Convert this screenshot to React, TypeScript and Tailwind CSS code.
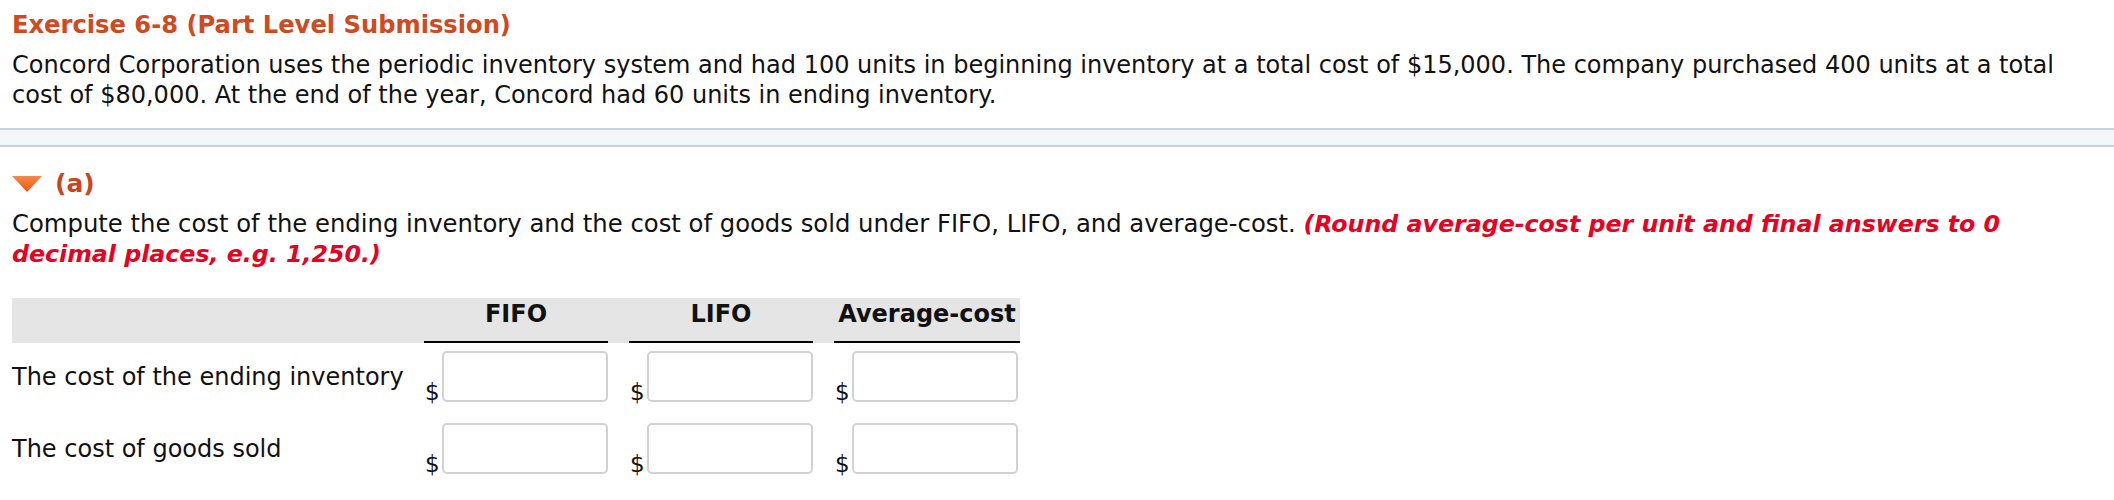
import React from "react";

const font = { fontFamily: '"DejaVu Sans", Verdana, sans-serif' };

function Cell({ w }: { w: string }) {
  return (
    <div className={`flex items-end shrink-0 ${w}`}>
      <span className="text-[23px] leading-[20px] text-[#111] w-[18px] pl-[1px]">$</span>
      <div className="w-[166px] h-[51px] border-2 border-[#d2d2d2] rounded-[5px] bg-white" />
    </div>
  );
}

function Row({ label }: { label: string }) {
  return (
    <div className="flex items-start">
      <div className="w-[412px] shrink-0 pt-[11px] text-[24px] leading-[30px] text-[#111] whitespace-nowrap">{label}</div>
      <div className="flex gap-[21px]">
        <Cell w="w-[184px]" />
        <Cell w="w-[184px]" />
        <Cell w="w-[186px]" />
      </div>
    </div>
  );
}

export default function App() {
  return (
    <div className="w-[2114px] h-[500px] bg-white overflow-hidden" style={font}>
      <div className="px-3 pt-[10px]">
        <h1 className="text-[24.2px] leading-[30px] font-bold text-[#d04a1f]">
          Exercise 6-8 (Part Level Submission)
        </h1>
        <p className="mt-[10px] text-[24px] leading-[30px] text-[#111]">
          Concord Corporation uses the periodic inventory system and had 100 units in beginning inventory at a total cost of $15,000. The company purchased 400 units at a total cost of $80,000. At the end of the year, Concord had 60 units in ending inventory.
        </p>
      </div>
      <div className="mt-[18px] h-[19px] border-y-2 border-[#c9d1dc] bg-[#f4f7fa]" />
      <div className="px-3">
        <div className="mt-[22px] flex items-center gap-[13px] h-[30px]">
          <svg width="30" height="16" viewBox="0 0 30 16" className="shrink-0">
            <defs>
              <linearGradient id="tri" x1="0" y1="0" x2="0" y2="1">
                <stop offset="0" stopColor="#f58a4a" />
                <stop offset="1" stopColor="#f0560f" />
              </linearGradient>
            </defs>
            <polygon points="0,0 30,0 15,16" fill="url(#tri)" />
          </svg>
          <span className="text-[25px] leading-[30px] font-bold text-[#c8461e]">(a)</span>
        </div>
        <p className="mt-[10px] text-[24.3px] leading-[30px] text-[#111]">
          Compute the cost of the ending inventory and the cost of goods sold under FIFO, LIFO, and average-cost.{" "}
          <span className="font-bold italic text-[23.7px] text-[#ea0020]">
            (Round average-cost per unit and final answers to 0 decimal places, e.g. 1,250.)
          </span>
        </p>
        <div className="mt-[29px] w-[1008px] h-[45px] bg-[#e5e5e5] flex">
          <div className="w-[412px] shrink-0" />
          <div className="flex gap-[21px]">
            <div className="w-[184px] border-b-2 border-black text-center font-bold text-[24px] leading-[33px] text-[#111]">FIFO</div>
            <div className="w-[184px] border-b-2 border-black text-center font-bold text-[24px] leading-[33px] text-[#111]">LIFO</div>
            <div className="w-[186px] border-b-2 border-black text-center font-bold text-[24px] leading-[33px] text-[#111] whitespace-nowrap">Average-cost</div>
          </div>
        </div>
        <div className="pt-[8px] flex flex-col gap-[21px]">
          <Row label="The cost of the ending inventory" />
          <Row label="The cost of goods sold" />
        </div>
      </div>
    </div>
  );
}
